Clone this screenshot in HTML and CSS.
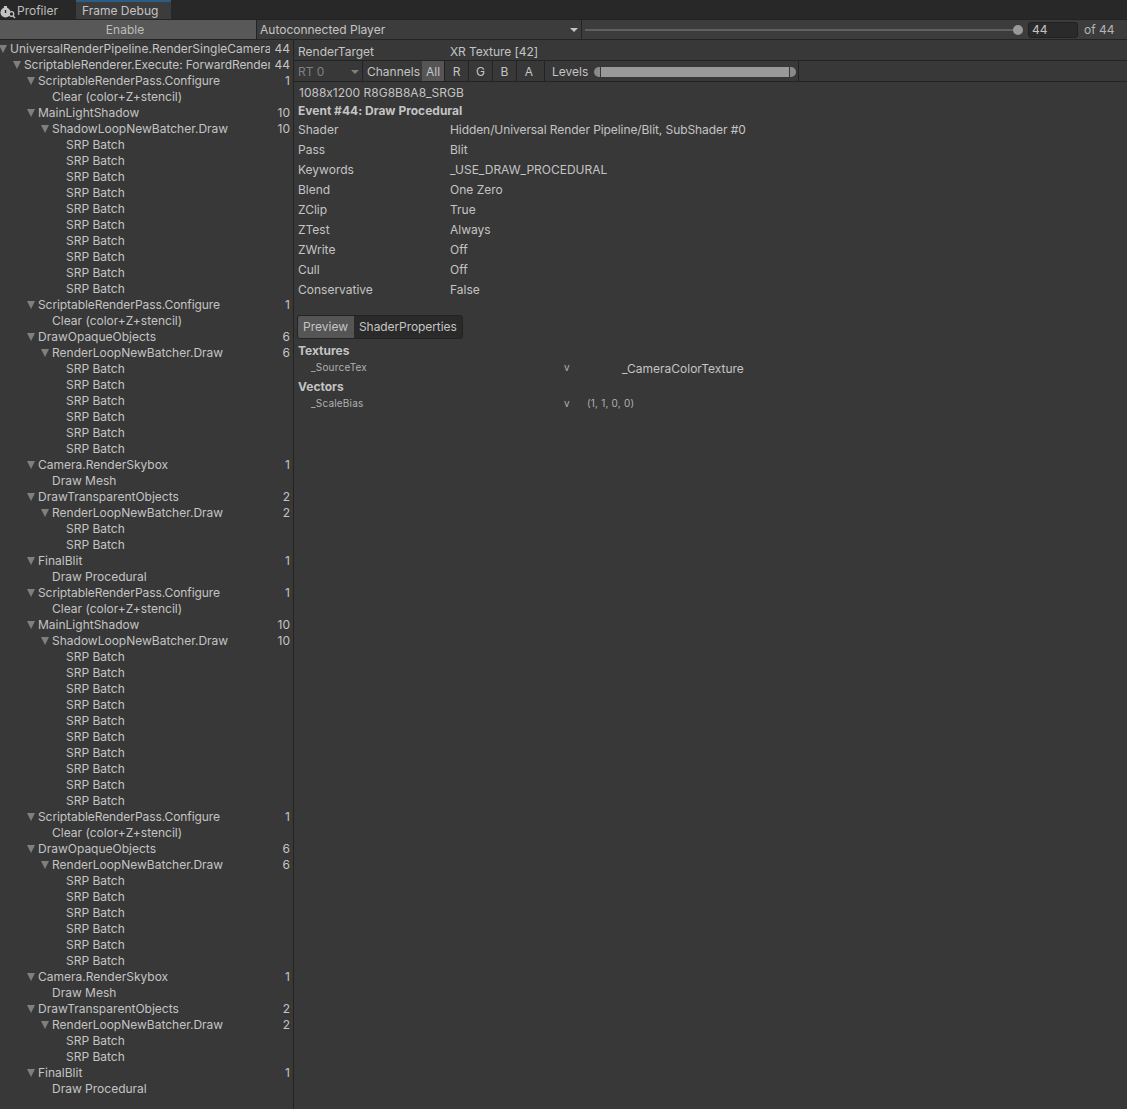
FILE: index.html
```html
<!DOCTYPE html>
<html lang="en">
<head>
<meta charset="utf-8">
<title>Frame Debug</title>
<link rel="stylesheet" href="styles.css">
</head>
<body>
<div class="tabbar">
  <div class="tab tab-profiler">
    <svg class="tab-icon" width="16" height="16" viewBox="0 0 16 16"><circle cx="5.5" cy="9.5" r="5" fill="#c4c4c4"/><rect x="4" y="3" width="3" height="2" fill="#c4c4c4"/><path d="M5.5 7v3" stroke="#282828" stroke-width="1.4"/><circle cx="11.5" cy="11" r="2.3" fill="#282828" stroke="#c4c4c4" stroke-width="1.2"/><path d="M13 13l2 2" stroke="#c4c4c4" stroke-width="1.4"/></svg>
    <span>Profiler</span>
  </div>
  <div class="tab tab-active">Frame Debug</div>
</div>
<div class="toolbar">
  <div class="enable">Enable</div>
  <div class="player"><span>Autoconnected Player</span><i class="caret"></i></div>
  <div class="slider"><div class="track"></div><div class="thumb"></div></div>
  <div class="numfield">44</div>
  <div class="of">of 44</div>
</div>
<div class="main">
  <div class="tree">
    <div class="row d0 clip"><i class="arrow"></i><span class="name">UniversalRenderPipeline.RenderSingleCamera</span><span class="count">44</span></div>
    <div class="row d1 clip"><i class="arrow"></i><span class="name tight">ScriptableRenderer.Execute: ForwardRenderer</span><span class="count">44</span></div>
    <div class="row d2"><i class="arrow"></i><span class="name tight">ScriptableRenderPass.Configure</span><span class="count">1</span></div>
    <div class="row d3"><span class="name">Clear (color+Z+stencil)</span></div>
    <div class="row d2"><i class="arrow"></i><span class="name">MainLightShadow</span><span class="count">10</span></div>
    <div class="row d3"><i class="arrow"></i><span class="name">ShadowLoopNewBatcher.Draw</span><span class="count">10</span></div>
    <div class="row d4"><span class="name">SRP Batch</span></div>
    <div class="row d4"><span class="name">SRP Batch</span></div>
    <div class="row d4"><span class="name">SRP Batch</span></div>
    <div class="row d4"><span class="name">SRP Batch</span></div>
    <div class="row d4"><span class="name">SRP Batch</span></div>
    <div class="row d4"><span class="name">SRP Batch</span></div>
    <div class="row d4"><span class="name">SRP Batch</span></div>
    <div class="row d4"><span class="name">SRP Batch</span></div>
    <div class="row d4"><span class="name">SRP Batch</span></div>
    <div class="row d4"><span class="name">SRP Batch</span></div>
    <div class="row d2"><i class="arrow"></i><span class="name tight">ScriptableRenderPass.Configure</span><span class="count">1</span></div>
    <div class="row d3"><span class="name">Clear (color+Z+stencil)</span></div>
    <div class="row d2"><i class="arrow"></i><span class="name">DrawOpaqueObjects</span><span class="count">6</span></div>
    <div class="row d3"><i class="arrow"></i><span class="name">RenderLoopNewBatcher.Draw</span><span class="count">6</span></div>
    <div class="row d4"><span class="name">SRP Batch</span></div>
    <div class="row d4"><span class="name">SRP Batch</span></div>
    <div class="row d4"><span class="name">SRP Batch</span></div>
    <div class="row d4"><span class="name">SRP Batch</span></div>
    <div class="row d4"><span class="name">SRP Batch</span></div>
    <div class="row d4"><span class="name">SRP Batch</span></div>
    <div class="row d2"><i class="arrow"></i><span class="name">Camera.RenderSkybox</span><span class="count">1</span></div>
    <div class="row d3"><span class="name">Draw Mesh</span></div>
    <div class="row d2"><i class="arrow"></i><span class="name">DrawTransparentObjects</span><span class="count">2</span></div>
    <div class="row d3"><i class="arrow"></i><span class="name">RenderLoopNewBatcher.Draw</span><span class="count">2</span></div>
    <div class="row d4"><span class="name">SRP Batch</span></div>
    <div class="row d4"><span class="name">SRP Batch</span></div>
    <div class="row d2"><i class="arrow"></i><span class="name">FinalBlit</span><span class="count">1</span></div>
    <div class="row d3"><span class="name">Draw Procedural</span></div>
    <div class="row d2"><i class="arrow"></i><span class="name tight">ScriptableRenderPass.Configure</span><span class="count">1</span></div>
    <div class="row d3"><span class="name">Clear (color+Z+stencil)</span></div>
    <div class="row d2"><i class="arrow"></i><span class="name">MainLightShadow</span><span class="count">10</span></div>
    <div class="row d3"><i class="arrow"></i><span class="name">ShadowLoopNewBatcher.Draw</span><span class="count">10</span></div>
    <div class="row d4"><span class="name">SRP Batch</span></div>
    <div class="row d4"><span class="name">SRP Batch</span></div>
    <div class="row d4"><span class="name">SRP Batch</span></div>
    <div class="row d4"><span class="name">SRP Batch</span></div>
    <div class="row d4"><span class="name">SRP Batch</span></div>
    <div class="row d4"><span class="name">SRP Batch</span></div>
    <div class="row d4"><span class="name">SRP Batch</span></div>
    <div class="row d4"><span class="name">SRP Batch</span></div>
    <div class="row d4"><span class="name">SRP Batch</span></div>
    <div class="row d4"><span class="name">SRP Batch</span></div>
    <div class="row d2"><i class="arrow"></i><span class="name tight">ScriptableRenderPass.Configure</span><span class="count">1</span></div>
    <div class="row d3"><span class="name">Clear (color+Z+stencil)</span></div>
    <div class="row d2"><i class="arrow"></i><span class="name">DrawOpaqueObjects</span><span class="count">6</span></div>
    <div class="row d3"><i class="arrow"></i><span class="name">RenderLoopNewBatcher.Draw</span><span class="count">6</span></div>
    <div class="row d4"><span class="name">SRP Batch</span></div>
    <div class="row d4"><span class="name">SRP Batch</span></div>
    <div class="row d4"><span class="name">SRP Batch</span></div>
    <div class="row d4"><span class="name">SRP Batch</span></div>
    <div class="row d4"><span class="name">SRP Batch</span></div>
    <div class="row d4"><span class="name">SRP Batch</span></div>
    <div class="row d2"><i class="arrow"></i><span class="name">Camera.RenderSkybox</span><span class="count">1</span></div>
    <div class="row d3"><span class="name">Draw Mesh</span></div>
    <div class="row d2"><i class="arrow"></i><span class="name">DrawTransparentObjects</span><span class="count">2</span></div>
    <div class="row d3"><i class="arrow"></i><span class="name">RenderLoopNewBatcher.Draw</span><span class="count">2</span></div>
    <div class="row d4"><span class="name">SRP Batch</span></div>
    <div class="row d4"><span class="name">SRP Batch</span></div>
    <div class="row d2"><i class="arrow"></i><span class="name">FinalBlit</span><span class="count">1</span></div>
    <div class="row d3"><span class="name">Draw Procedural</span></div>
  </div>
  <div class="detail">
    <div class="target-row"><span class="key">RenderTarget</span><span class="tight">XR Texture [42]</span></div>
    <div class="channel-row">
      <div class="rt"><span>RT 0</span><i class="caret dim"></i></div>
      <div class="chan-label">Channels</div>
      <div class="chan on">All</div>
      <div class="chan">R</div>
      <div class="chan">G</div>
      <div class="chan">B</div>
      <div class="chan last">A</div>
      <div class="levels">
        <span>Levels</span>
        <i class="knob left"></i><div class="bar"></div><i class="knob right"></i>
      </div>
    </div>
    <div class="format">1088x1200 R8G8B8A8_SRGB</div>
    <div class="event">Event #44: Draw Procedural</div>
    <div class="props">
      <div class="prop"><span class="key">Shader</span><span class="tight">Hidden/Universal Render Pipeline/Blit, SubShader #0</span></div>
      <div class="prop"><span class="key">Pass</span><span>Blit</span></div>
      <div class="prop"><span class="key">Keywords</span><span>_USE_DRAW_PROCEDURAL</span></div>
      <div class="prop"><span class="key">Blend</span><span>One Zero</span></div>
      <div class="prop"><span class="key">ZClip</span><span>True</span></div>
      <div class="prop"><span class="key">ZTest</span><span>Always</span></div>
      <div class="prop"><span class="key">ZWrite</span><span>Off</span></div>
      <div class="prop"><span class="key">Cull</span><span>Off</span></div>
      <div class="prop"><span class="key">Conservative</span><span>False</span></div>
    </div>
    <div class="segments">
      <div class="seg seg-on">Preview</div>
      <div class="seg tight">ShaderProperties</div>
    </div>
    <div class="heading">Textures</div>
    <div class="sp tex"><span class="sp-name">_SourceTex</span><span class="sp-stage">v</span><span class="sp-tex">_CameraColorTexture</span></div>
    <div class="heading vec">Vectors</div>
    <div class="sp"><span class="sp-name">_ScaleBias</span><span class="sp-stage">v</span><span class="sp-val">(1, 1, 0, 0)</span></div>
  </div>
</div>
</body>
</html>
```
FILE: styles.css
```css
* { box-sizing: border-box; }
html, body { margin: 0; height: 100%; }
body {
  width: 1127px;
  height: 1109px;
  overflow: hidden;
  background: #383838;
  color: #c4c4c4;
  font: 12px/16px Inter, "Liberation Sans", sans-serif;
  font-feature-settings: "calt" 0;
  display: flex;
  flex-direction: column;
}
i { display: block; }
.tight { letter-spacing: -.08px; }

.tabbar { height: 19px; background: #282828; display: flex; flex: none; }
.tab { height: 19px; line-height: 21px; display: flex; }
.tab-profiler { width: 76px; color: #bdbdbd; }
.tab-icon { flex: none; margin-top: 3px; }
.tab-profiler span { margin-left: 1px; }
.tab-active {
  width: 95px;
  background: #3c3c3c;
  border-top: 2px solid #2c5d87;
  padding-left: 6px;
  line-height: 17px;
  color: #c4c4c4;
}

.toolbar {
  height: 21px;
  flex: none;
  display: flex;
  background: #3c3c3c;
  border-top: 1px solid #232323;
  border-bottom: 1px solid #232323;
  line-height: 19px;
}
.enable { width: 256px; padding-right: 6px; background: #585858; text-align: center; color: #bcbcbc; }
.player {
  width: 326px;
  border-left: 1px solid #232323;
  border-right: 1px solid #232323;
  padding: 0 3px;
  display: flex;
  align-items: center;
  justify-content: space-between;
}
.caret {
  width: 0; height: 0;
  border-left: 4px solid transparent;
  border-right: 4px solid transparent;
  border-top: 4px solid #c4c4c4;
}
.caret.dim { border-top-color: #808080; }
.slider { width: 441px; margin-left: 3px; padding-right: 3px; display: flex; align-items: center; }
.track { flex: 1; height: 2px; background: #606060; }
.thumb { width: 10px; height: 10px; border-radius: 50%; background: #999; }
.numfield {
  width: 50px; height: 16px;
  margin: 2px 0 0 2px;
  background: #2a2a2a;
  border: 1px solid #212121;
  border-radius: 3px;
  padding-left: 3px;
  line-height: 14px;
}
.of { margin-left: 6px; color: #b4b4b4; }

.main { flex: 1; display: flex; min-height: 0; }
.tree { width: 293px; flex: none; padding-top: 1px; }
.row { height: 16px; display: flex; align-items: center; padding-right: 3px; white-space: nowrap; }
.name { flex: 1; overflow: hidden; }
.count { text-align: right; margin-left: 4px; }
.clip .name { flex: 0 auto; width: 100%; }
.arrow {
  width: 0; height: 0; flex: none;
  margin-right: 3px;
  margin-left: -11px;
  border-left: 4px solid transparent;
  border-right: 4px solid transparent;
  border-top: 8px solid #7f7f7f;
}
.d0 { padding-left: 10px; }
.d1 { padding-left: 24px; }
.d2 { padding-left: 38px; }
.d3 { padding-left: 52px; }
.d4 { padding-left: 66px; }

.detail { flex: 1; border-left: 1px solid #232323; min-width: 0; }
.target-row {
  height: 21px;
  display: flex;
  align-items: center;
  padding: 3px 0 0 4px;
  border-bottom: 1px solid #232323;
}
.key { width: 152px; flex: none; }
.channel-row {
  height: 21px;
  display: flex;
  line-height: 22px;
  border-bottom: 1px solid #232323;
}
.rt {
  width: 69px; padding: 2px 3px 0 4px; color: #808080;
  display: flex; align-items: center; justify-content: space-between;
  border-right: 1px solid #232323;
}
.chan-label { width: 59px; padding-left: 4px; }
.chan { width: 24px; text-align: center; border-right: 1px solid #232323; }
.chan.on { background: #555; width: 23px; }
.chan.last { width: 28px; padding-right: 3px; }
.levels {
  width: 254px;
  display: flex;
  align-items: center;
  padding: 2px 0 0 7px;
  border-right: 1px solid #232323;
}
.levels span { margin-right: 6px; }
.knob { width: 7px; height: 10px; background: #8a8a8a; flex: none; }
.knob.left { border-radius: 5px 0 0 5px; border-right: 1px solid #383838; }
.knob.right { border-radius: 0 5px 5px 0; border-left: 1px solid #383838; }
.bar { width: 188px; height: 10px; background: #999; }

.format { margin: 3px 0 0 5px; }
.event { margin: 2px 0 0 4px; font-weight: 700; }
.props { margin-top: 1px; }
.prop { height: 20px; display: flex; align-items: center; padding-left: 4px; }
.segments {
  display: flex;
  width: 166px; height: 24px;
  margin: 15px 0 0 3px;
  background: #2a2a2a;
  border: 1px solid #232323;
  border-radius: 3px;
  line-height: 22px;
  overflow: hidden;
}
.seg { padding: 0 7px 0 5px; }
.seg-on { width: 56px; background: #555; }
.heading { margin: 4px 0 0 4px; font-weight: 700; }
.sp { display: flex; height: 16px; font-size: 10px; letter-spacing: .2px; padding-left: 17px; color: #b0b0b0; align-items: center; }
.sp-name { width: 253px; flex: none; }
.sp-stage { width: 23px; flex: none; }
.sp-tex { margin: 4px 0 0 35px; font-size: 12px; letter-spacing: 0; color: #c4c4c4; }
```
